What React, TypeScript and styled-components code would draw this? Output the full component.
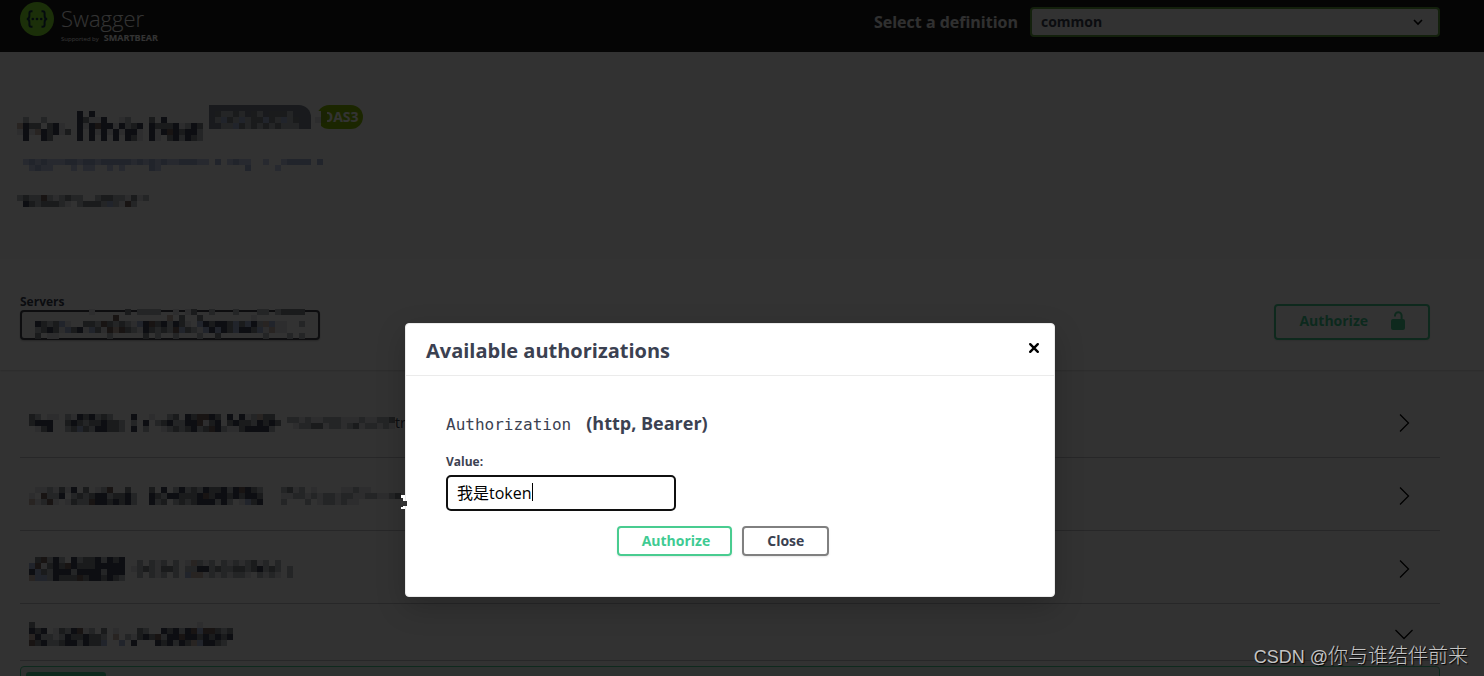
import React from 'react';
import styled, { createGlobalStyle, css } from 'styled-components';

const GlobalStyle = createGlobalStyle`
  *, *::before, *::after { box-sizing: border-box; }
  body {
    margin: 0;
    background: #fafafa;
    color: #3b4151;
    font-family: 'Open Sans', 'Noto Sans CJK SC', sans-serif;
  }
  h1, h2, h3, h4, p { margin: 0; }
`;

const Page = styled.div`
  position: relative;
  height: 100vh;
  overflow: hidden;
`;

const gutters = css`
  padding-left: 20px;
  padding-right: 44px;
`;

const TopBar = styled.header`
  ${gutters}
  display: flex;
  align-items: flex-start;
  justify-content: space-between;
  height: 52px;
  background: #1b1b1b;
`;

const LogoLink = styled.a`
  display: flex;
  gap: 7px;
  padding-top: 2px;
  color: #fff;
  text-decoration: none;
`;

const LogoWords = styled.span`
  display: flex;
  flex-direction: column;
  padding-top: 2px;
`;

const LogoName = styled.span`
  font-size: 22px;
  font-weight: 300;
  line-height: 28px;
`;

const LogoOwner = styled.span`
  display: flex;
  align-items: baseline;
  gap: 5px;
  font-size: 6px;
  line-height: 12px;
  strong {
    font-size: 9px;
    font-weight: 700;
  }
`;

const Definition = styled.label`
  display: flex;
  align-items: center;
  gap: 12px;
  padding-top: 7px;
  color: #f0f0f0;
  font-size: 16px;
  font-weight: 700;
`;

const SelectBox = styled.span<{ $width: number }>`
  position: relative;
  display: block;
  width: ${(p) => p.$width}px;
`;

const Select = styled.select<{ $border: string }>`
  appearance: none;
  display: block;
  width: 100%;
  height: 30px;
  padding: 0 40px 2px 9px;
  border: 2px solid ${(p) => p.$border};
  border-radius: 4px;
  background: #f7f7f7;
  box-shadow: 0 1px 2px rgba(0, 0, 0, 0.25);
  color: #3b4151;
  font-family: inherit;
  font-size: 14px;
  font-weight: 700;
`;

const SelectArrow = styled.svg`
  position: absolute;
  top: 10px;
  right: 16px;
`;

const Info = styled.section`
  ${gutters}
  display: flex;
  flex-direction: column;
  height: 207px;
  padding-top: 53px;
`;

const TitleLine = styled.h2`
  display: flex;
  align-items: flex-start;
  gap: 6px;
  height: 54px;
  margin-left: -3px;
`;

const TitleText = styled.span`
  display: block;
  padding-top: 6px;
`;

const VersionBadge = styled.span`
  display: block;
  width: 102px;
  height: 24px;
  border-radius: 0 12px 0 0;
  background: #7d8492;
`;

const OasBadge = styled.span`
  position: relative;
  display: block;
  height: 24px;
  padding: 0 4px 0 5px;
  border-radius: 12px;
  background: #89bf04;
  color: #fff;
  font-size: 14px;
  font-weight: 700;
  line-height: 24px;
`;

const BadgePatch = styled.span`
  position: absolute;
  top: 0;
  left: -2px;
`;

const SpecLink = styled.a`
  display: block;
  height: 36px;
  padding-left: 3px;
`;

const Description = styled.p`
  margin-left: -3px;
`;

const SchemeBar = styled.section`
  ${gutters}
  display: flex;
  align-items: center;
  justify-content: space-between;
  height: 111px;
  background: #fff;
  box-shadow: 0 1px 2px rgba(0, 0, 0, 0.15);
`;

const Servers = styled.label`
  display: flex;
  flex-direction: column;
  padding-top: 4px;
  font-size: 12px;
  font-weight: 700;
  line-height: 16px;
`;

const ServerPatch = styled.span`
  position: absolute;
  top: -1px;
  left: 15px;
`;

const Button = styled.button<{ $tone: 'green' | 'grey'; $tall?: boolean }>`
  display: flex;
  align-items: center;
  justify-content: center;
  gap: 22px;
  height: ${(p) => (p.$tall ? 36 : 30)}px;
  padding: 0 ${(p) => (p.$tone === 'green' ? 20 : 23)}px 2px 23px;
  border: 2px solid ${(p) => (p.$tone === 'green' ? '#49cc90' : '#808080')};
  border-radius: 4px;
  background: transparent;
  box-shadow: 0 1px 2px rgba(0, 0, 0, 0.1);
  color: ${(p) => (p.$tone === 'green' ? '#3fcb93' : '#3b4151')};
  font-family: inherit;
  font-size: 14px;
  font-weight: 700;
`;

const SchemeAction = styled.div`
  padding-top: 14px;
  padding-right: 10px;
`;

const Tags = styled.main`
  ${gutters}
  padding-top: 15px;
`;

const TagRow = styled.h3<{ $open?: boolean }>`
  display: flex;
  align-items: center;
  gap: 6px;
  height: ${(p) => (p.$open ? 57 : 73)}px;
  padding: 4px 26px 0 9px;
  border-bottom: 1px solid rgba(59, 65, 81, 0.3);
  font-size: 14px;
  font-weight: 400;
  line-height: 20px;
`;

const Note = styled.span`
  display: flex;
  align-items: center;
`;

const TagToggle = styled.button`
  display: block;
  margin-left: auto;
  padding: 0;
  border: 0;
  background: none;
  line-height: 0;
`;

const Operation = styled.div`
  height: 60px;
  margin-top: 5px;
  padding: 5px;
  border: 1px solid #49cc90;
  border-radius: 4px;
  background: rgba(73, 204, 144, 0.1);
`;

const Method = styled.div`
  width: 80px;
  height: 30px;
  border-radius: 3px;
  background: #49cc90;
`;

const Backdrop = styled.div`
  position: absolute;
  inset: 0;
  display: flex;
  align-items: flex-start;
  justify-content: center;
  padding: 323px 24px 0 0;
  background: rgba(0, 0, 0, 0.8);
`;

const Dialog = styled.section`
  position: relative;
  width: 650px;
  border: 1px solid #ebebeb;
  border-radius: 4px;
  background: #fff;
  box-shadow: 0 10px 30px rgba(0, 0, 0, 0.2);
`;

const DialogHeader = styled.header`
  display: flex;
  align-items: center;
  justify-content: space-between;
  height: 52px;
  padding: 0 14px 0 20px;
  border-bottom: 1px solid #ebebeb;
`;

const DialogTitle = styled.h1`
  padding-top: 2px;
  font-size: 20px;
  font-weight: 700;
  line-height: 28px;
`;

const CloseIcon = styled.button`
  display: block;
  margin-bottom: 4px;
  padding: 0;
  border: 0;
  background: none;
  line-height: 0;
`;

const DialogBody = styled.form`
  display: flex;
  flex-direction: column;
  align-items: flex-start;
  padding: 33px 40px 40px;
`;

const SchemeName = styled.h4`
  display: flex;
  align-items: baseline;
  gap: 15px;
  font-size: 18px;
  font-weight: 700;
  line-height: 28px;
  code {
    font-family: 'DejaVu Sans Mono', monospace;
    font-size: 16px;
    font-weight: 400;
  }
`;

const ValueLabel = styled.label`
  margin-top: 13px;
  font-size: 12px;
  font-weight: 700;
  line-height: 20px;
`;

const Field = styled.div`
  display: flex;
  align-items: center;
  width: 230px;
  height: 36px;
  margin-top: 3px;
  padding: 0 9px 2px;
  border: 2px solid #101010;
  border-radius: 5px;
`;

const FieldInput = styled.input`
  field-sizing: content;
  min-width: 0;
  padding: 0;
  border: 0;
  outline: 0;
  background: none;
  color: #000;
  font-family: 'Open Sans', 'Noto Sans CJK SC', sans-serif;
  font-size: 16px;
`;

const Caret = styled.span`
  width: 1px;
  height: 18px;
  background: #000;
`;

const Actions = styled.div`
  display: flex;
  align-self: center;
  gap: 10px;
  margin-top: 15px;
  padding-right: 14px;
`;

const Pointer = styled.svg`
  position: absolute;
  top: 171px;
  left: -5px;
`;

const Watermark = styled.p`
  position: absolute;
  right: 16px;
  bottom: 4px;
  color: #c4c4c4;
  font-family: 'Liberation Sans', 'Noto Sans CJK SC', sans-serif;
  font-size: 18px;
  font-weight: 300;
  line-height: 30px;
  text-shadow: 1px 1px 1px #000;
`;

const WatermarkName = styled.span`
  font-size: 20px;
`;

/* Letters pick the tone of one square; a dot leaves it clear. */
const tones: Record<string, string> = {
  a: '#dfe1e4',
  b: '#b4b8be',
  c: '#82868e',
  d: '#41485a',
  e: '#7a6660',
  f: '#c8b4aa',
  g: '#a5b4d4',
  h: '#c4cdea',
  w: '#fafafa',
  y: '#80b010',
};

const CELL = 6;

function Mosaic({ rows }: { rows: string[] }) {
  const width = Math.max(...rows.map((r) => r.length)) * CELL;
  return (
    <svg width={width} height={rows.length * CELL} shapeRendering="crispEdges" aria-hidden="true" display="block">
      {rows.flatMap((row, y) =>
        [...row].map((ch, x) =>
          tones[ch] ? <rect key={`${x}-${y}`} x={x * CELL} y={y * CELL} width={CELL} height={CELL} fill={tones[ch]} /> : null,
        ),
      )}
    </svg>
  );
}

const title = [
  '..........d.d..................',
  '.b..b.....dcaad..ab...c.d......',
  'fdcc.cda..dadeddadbcd.dcccdabdc',
  'adafdcdac.d.dadadadda.dadedcddb',
  '.d..dc....d.d.d.d.dca.da.cdbdcb',
];
const version = [
  '................',
  '.cbbcb.cb.cccb..',
  '.bgcbgbccgcbgbc.',
  '..bbgcbcbcbcbbb.',
];
const badgePatch = ['..', 'wy', 'ay', 'w.'];
const specUrl = [
  'hghghhhgghgghggggghghghghhggghh.g.hghh..h..hgggg.g',
  '.hghh...h.hh..h.h....gh..............g....h......',
];
const description = ['bcbbebabcbb..bccbbacab', '.dcbcccba.bcccbgbaeb..'];
const server = [
  '.........a.....c.bbbb..a.ac..b...b...bb.bcccc',
  '.............e........f.c..c........a........',
  'dcbcga..ccbecbcbagdecdbdca.gdcddcgcgdbfgaa..b',
  'bcdcagcdagcaefecbadcbcbegcbagdgdcgddcgafaa...',
  'c.aa........b.....c.b..b...b..c.......b...b.b',
];
const rowOne = [
  'cb.aa.badcdbcb...d..a..bc.dceedc.d.dabfcc.',
  'cddd..cdcbccdccb.b.d.bcdbbddeacd.cdccbdcdc',
  '.acd..bcgcbddccb.d.b..abcbcdbcedbaacddddb.',
];
const rowOneNote = ['bbabaabbbaaabaabbc', '.abbccabbabcabbaba'];
const rowTwo = [
  '.aabacad.c.abe..c...c.d.bdbcbdccdbdedcb..',
  'a.ebbd.bcbcddbccdb..dcbddcccdecddcdcddc..',
  'fabea.acbbeddcdcdb..dbc.bcbcdddbdb.agcd..',
];
const rowTwoNote = ['bcab.a....aabaa.....', 'aabbababbabbaabbaabc', 'b...b.abbabaa.......'];
const rowThree = ['.cebdb.dbccdbdcd', 'geacdcedcccddddd', 'dgcbdddbddddbddd', 'fggbdcccecddcdcb'];
const rowThreeNote = ['.b.bab.b.afbab.bababcab.b..', 'abcbaccb.bbddbcbbccbcdbcb.b', '.b.bab.b.gffabababba.baba.b'];
const rowFour = [
  'c...........................a.....',
  'dcd.acbdeab.c.a...cb..dcdbdegeecbc',
  'fdbbabdccdccb.f.bacdcebddeddcdcdcd',
  'ecdbbcddbdccg..g.d...dcdbdcfgddcb.',
];

function Chevron({ down }: { down?: boolean }) {
  return (
    <svg width="20" height="20" viewBox="0 0 20 20" fill="none" stroke="#000" strokeWidth="1.3" aria-hidden="true">
      <path d={down ? 'M1.5 6 10 14.5 18.5 6' : 'M6 1.5 14.5 10 6 18.5'} />
    </svg>
  );
}

function SwaggerMark() {
  return (
    <svg width="34" height="34" viewBox="0 0 34 34" aria-hidden="true">
      <circle cx="17" cy="17" r="17" fill="#85ea2d" />
      <g fill="none" stroke="#173647" strokeWidth="2">
        <path d="M12.5 9.2h-1.3q-1.8 0-1.8 2v2.6q0 3.2-2.6 3.2q2.6 0 2.6 3.2v2.6q0 2 1.8 2h1.3" />
        <path d="M21.5 9.2h1.3q1.8 0 1.8 2v2.6q0 3.2 2.6 3.2q-2.6 0-2.6 3.2v2.6q0 2-1.8 2h-1.3" />
      </g>
      <g fill="#173647">
        <circle cx="12.8" cy="17" r="1.3" />
        <circle cx="17" cy="17" r="1.3" />
        <circle cx="21.2" cy="17" r="1.3" />
      </g>
    </svg>
  );
}

function Tag({ name, note, tail, open }: { name: string[]; note?: string[]; tail?: string; open?: boolean }) {
  return (
    <TagRow $open={open}>
      <Mosaic rows={name} />
      {note && (
        <Note>
          <Mosaic rows={note} />
          {tail}
        </Note>
      )}
      <TagToggle type="button" aria-label={open ? 'Collapse operation' : 'Expand operation'}>
        <Chevron down={open} />
      </TagToggle>
    </TagRow>
  );
}

export default function App() {
  return (
    <>
      <GlobalStyle />
      <Page>
        <TopBar>
          <LogoLink href="#">
            <SwaggerMark />
            <LogoWords>
              <LogoName>Swagger</LogoName>
              <LogoOwner>
                Supported by <strong>SMARTBEAR</strong>
              </LogoOwner>
            </LogoWords>
          </LogoLink>
          <Definition>
            Select a definition
            <SelectBox $width={410}>
              <Select $border="#62a03f" defaultValue="common">
                <option>common</option>
              </Select>
              <SelectArrow width="12" height="10" viewBox="0 0 12 10" fill="none" stroke="#000" strokeWidth="1.6">
                <path d="M2 3 6 7 10 3" />
              </SelectArrow>
            </SelectBox>
          </Definition>
        </TopBar>

        <Info>
          <TitleLine>
            <TitleText>
              <Mosaic rows={title} />
            </TitleText>
            <VersionBadge>
              <Mosaic rows={version} />
            </VersionBadge>
            <OasBadge>
              OAS3
              <BadgePatch>
                <Mosaic rows={badgePatch} />
              </BadgePatch>
            </OasBadge>
          </TitleLine>
          <SpecLink href="#" aria-label="API definition">
            <Mosaic rows={specUrl} />
          </SpecLink>
          <Description>
            <Mosaic rows={description} />
          </Description>
        </Info>

        <SchemeBar>
          <Servers>
            Servers
            <SelectBox $width={300}>
              <Select $border="#41444e" />
              <ServerPatch>
                <Mosaic rows={server} />
              </ServerPatch>
            </SelectBox>
          </Servers>
          <SchemeAction>
            <Button type="button" $tone="green" $tall>
              Authorize
              <svg width="18" height="20" viewBox="0 0 18 20" aria-hidden="true">
                <rect x="1" y="8" width="14" height="11" rx="2" fill="#49cc90" />
                <path d="M5 5.5V4.5a3.3 3.3 0 0 1 6.6 0V9" fill="none" stroke="#49cc90" strokeWidth="2" />
              </svg>
            </Button>
          </SchemeAction>
        </SchemeBar>

        <Tags>
          <Tag name={rowOne} note={rowOneNote} tail="tr" />
          <Tag name={rowTwo} note={rowTwoNote} />
          <Tag name={rowThree} note={rowThreeNote} />
          <Tag name={rowFour} open />
          <Operation>
            <Method />
          </Operation>
        </Tags>

        <Backdrop>
          <Dialog role="dialog" aria-modal="true" aria-labelledby="dialog-title">
            <DialogHeader>
              <DialogTitle id="dialog-title">Available authorizations</DialogTitle>
              <CloseIcon type="button" aria-label="Close dialog">
                <svg width="12" height="12" viewBox="0 0 12 12" stroke="#000" strokeWidth="2.4" strokeLinecap="round" aria-hidden="true">
                  <path d="M2.2 2.2 9.8 9.8M9.8 2.2 2.2 9.8" />
                </svg>
              </CloseIcon>
            </DialogHeader>
            <DialogBody>
              <SchemeName>
                <code>Authorization</code>
                <span>(http, Bearer)</span>
              </SchemeName>
              <ValueLabel htmlFor="auth-value">Value:</ValueLabel>
              <Field>
                <FieldInput id="auth-value" type="text" defaultValue="我是token" />
                <Caret />
              </Field>
              <Actions>
                <Button type="button" $tone="green">
                  Authorize
                </Button>
                <Button type="button" $tone="grey">
                  Close
                </Button>
              </Actions>
            </DialogBody>
            <Pointer width="8" height="14" viewBox="0 0 8 14" aria-hidden="true">
              <path d="M0 0H4V6H2V3H0ZM0 14V12H2V11H4V14Z" fill="#fff" />
              <path d="M0 6H6V11H2V10H0Z" fill="#333" />
            </Pointer>
          </Dialog>
        </Backdrop>
        <Watermark>
          CSDN @<WatermarkName>你与谁结伴前来</WatermarkName>
        </Watermark>
      </Page>
    </>
  );
}
